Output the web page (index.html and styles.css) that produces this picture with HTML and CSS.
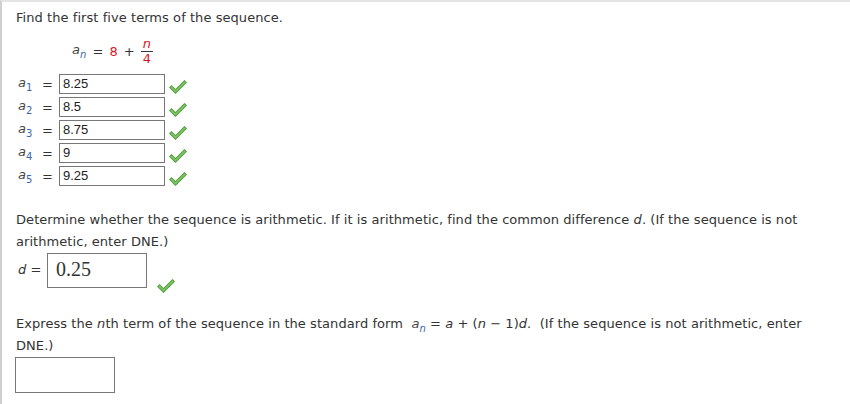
FILE: index.html
```html
<!DOCTYPE html>
<html>
<head>
<meta charset="utf-8">
<link rel="stylesheet" href="styles.css">
</head>
<body>
<div class="page">
  <p class="q q1">Find the first five terms of the sequence.</p>
  <div class="formula">
    <span class="term"><span class="var">a</span><sub class="sub">n</sub></span>
    <span class="op">=</span>
    <span class="red">8</span>
    <span class="op">+</span>
    <span class="frac"><span class="num red it">n</span><span class="den red">4</span></span>
  </div>
  <div class="terms">
    <div class="row"><span class="lab"><span class="var">a</span><sub class="sub">1</sub></span><span class="eq">=</span><span class="box">8.25</span><svg class="check" viewBox="0 0 18 14"><path class="o" d="M2.5 7.5 L6.5 11.5 L15.5 2.5" /><path class="i" d="M2.5 7.5 L6.5 11.5 L15.5 2.5" /></svg></div>
    <div class="row"><span class="lab"><span class="var">a</span><sub class="sub">2</sub></span><span class="eq">=</span><span class="box">8.5</span><svg class="check" viewBox="0 0 18 14"><path class="o" d="M2.5 7.5 L6.5 11.5 L15.5 2.5" /><path class="i" d="M2.5 7.5 L6.5 11.5 L15.5 2.5" /></svg></div>
    <div class="row"><span class="lab"><span class="var">a</span><sub class="sub">3</sub></span><span class="eq">=</span><span class="box">8.75</span><svg class="check" viewBox="0 0 18 14"><path class="o" d="M2.5 7.5 L6.5 11.5 L15.5 2.5" /><path class="i" d="M2.5 7.5 L6.5 11.5 L15.5 2.5" /></svg></div>
    <div class="row"><span class="lab"><span class="var">a</span><sub class="sub">4</sub></span><span class="eq">=</span><span class="box">9</span><svg class="check" viewBox="0 0 18 14"><path class="o" d="M2.5 7.5 L6.5 11.5 L15.5 2.5" /><path class="i" d="M2.5 7.5 L6.5 11.5 L15.5 2.5" /></svg></div>
    <div class="row"><span class="lab"><span class="var">a</span><sub class="sub">5</sub></span><span class="eq">=</span><span class="box">9.25</span><svg class="check" viewBox="0 0 18 14"><path class="o" d="M2.5 7.5 L6.5 11.5 L15.5 2.5" /><path class="i" d="M2.5 7.5 L6.5 11.5 L15.5 2.5" /></svg></div>
  </div>
  <p class="q q2">Determine whether the sequence is arithmetic. If it is arithmetic, find the common difference <span class="it">d</span>. (If the sequence is not<br>arithmetic, enter DNE.)</p>
  <div class="drow">
    <span class="dlab"><span class="it">d</span> =</span>
    <span class="bigbox">0.25</span>
    <svg class="check dcheck" viewBox="0 0 18 14"><path class="o" d="M2.5 7.5 L6.5 11.5 L15.5 2.5" /><path class="i" d="M2.5 7.5 L6.5 11.5 L15.5 2.5" /></svg>
  </div>
  <p class="q q3">Express the <span class="it">n</span>th term of the sequence in the standard form &nbsp;<span class="var">a</span><span class="sub">n</span> = <span class="it">a</span> + (<span class="it">n</span> − 1)<span class="it">d</span>.&nbsp; (If the sequence is not arithmetic, enter<br>DNE.)</p>
  <div class="emptybox"></div>
</div>
</body>
</html>
```
FILE: styles.css
```css
html, body { margin: 0; padding: 0; background: #fff; }
body { width: 850px; height: 404px; overflow: hidden; }
.page {
  border-top: 2px solid #e4e4e4;
  border-left: 2px solid #cfcfcf;
  height: 402px;
  padding-left: 14px;
  padding-right: 20px;
  font-family: "DejaVu Sans", Verdana, sans-serif;
  font-size: 13px;
  letter-spacing: 0.06px;
  color: #333;
}
.q { margin: 0; line-height: 22px; }
.q1 { padding-top: 5px; }
.it { font-style: italic; }
.var { font-style: italic; color: #444; }
.sub { font-size: 10px; color: #3a66b0; font-style: italic; vertical-align: -4px; line-height: 1; }
.row .sub { font-style: normal; }
.red { color: #d6192a; }
.formula {
  display: flex; align-items: center; height: 44px;
  padding-left: 56px;
}
.formula .op { margin: 0 6px; }
.term { display: inline-block; }
.frac { display: inline-flex; flex-direction: column; align-items: center; }
.frac .num { border-bottom: 1px solid #333; padding: 0 2px; line-height: 14px; }
.frac .den { line-height: 14px; }
.terms { display: flex; flex-direction: column; gap: 3px; margin-top: 1px; }
.row { display: flex; align-items: center; height: 20px; }
.lab { width: 24px; padding-left: 2px; }
.eq { width: 11px; margin-right: 6px; }
.box {
  box-sizing: border-box; width: 106px; height: 20px;
  border: 1px solid #777; padding-left: 3px;
  font-family: "Liberation Sans", Arial, sans-serif; font-size: 13px; line-height: 18px;
  letter-spacing: 0;
  color: #222;
}
.check { width: 18px; height: 14px; margin-left: 4px; margin-top: 6px; }
.check path { fill: none; stroke-linecap: square; stroke-linejoin: miter; }
.check .o { stroke: #4f9a3f; stroke-width: 3.6; }
.check .i { stroke: #7cc45f; stroke-width: 1.8; }
.q2 { margin-top: 23px; }
.drow { display: flex; align-items: flex-start; margin-top: 0; }
.dlab { width: 29px; padding-left: 2px; padding-top: 9px; }
.bigbox {
  box-sizing: border-box; width: 100px; height: 35px; border: 1px solid #777;
  font-family: "Liberation Serif", "Times New Roman", serif; font-size: 20px; color: #333;
  padding-left: 8px; line-height: 31px; letter-spacing: 0;
}
.dcheck { margin-left: 10px; margin-top: 26px; }
.q3 { margin-top: 20px; }
.emptybox { box-sizing: border-box; width: 100px; height: 36px; border: 1px solid #777; margin-top: 0; margin-left: -1px; }
```
